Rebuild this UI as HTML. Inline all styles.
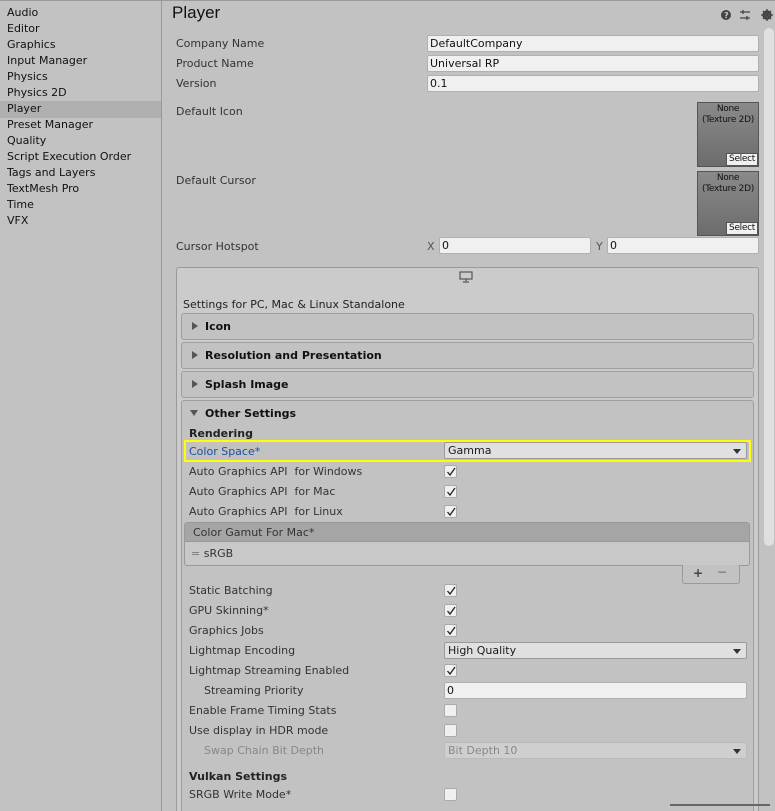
<!DOCTYPE html>
<html style="overflow:hidden;width:775px;height:811px"><head><style>
*{box-sizing:border-box;margin:0;padding:0}
body{width:775px;height:811px;overflow:hidden;background:#c2c2c2;font-family:"DejaVu Sans","Liberation Sans",sans-serif;font-size:11px;color:#1a1a1a;position:relative}
.a{position:absolute;white-space:nowrap}
.side{position:absolute;left:0;top:0;width:162px;height:811px;background:#c2c2c2;border-right:1px solid #999;border-top:1px solid #999}
.si{position:absolute;left:7px;font-size:11px;color:#111;top:6px}
.lab{position:absolute;font-size:11px;color:#333;line-height:14px;margin-top:1px}
.fld{position:absolute;height:17px;background:#f0f0f0;border:1px solid #b0b0b0;border-radius:2px;font-size:11px;line-height:15px;padding-left:2px;color:#111}
.cb{position:absolute;width:13px;height:13px;background:#f0f0f0;border:1px solid #aaa;border-radius:2px}
.cb svg{position:absolute;left:1px;top:1px}
.dd{position:absolute;height:17px;background:#e0e0e0;border:1px solid #999;border-radius:2px;font-size:11px;line-height:15px;padding-left:3px}
.dd:after{content:"";position:absolute;right:5px;top:6px;border-left:4px solid transparent;border-right:4px solid transparent;border-top:5px solid #333}
.fo{position:absolute;left:181px;width:573px;height:27px;background:#c2c2c2;border:1px solid #9f9f9f;border-radius:3px}
.fo span{position:absolute;left:23px;top:6px;font-weight:bold;font-size:11px;color:#111}
.fo i{position:absolute;left:10px;top:8px;border-top:4px solid transparent;border-bottom:4px solid transparent;border-left:6px solid #555}
.tex{position:absolute;left:697px;width:62px;height:65px;border:1px solid #555;background:linear-gradient(#8a8a8a,#6c6c6c);font-size:9px;text-align:center;line-height:11px;color:#111;letter-spacing:-0.3px;padding-top:1px}
.tex b{font-weight:normal;position:absolute;right:0;bottom:0;background:#f0f0f0;border:1px solid #555;font-size:9px;padding:0 2px;line-height:11px}
</style></head><body>
<div class="side">
<div style="position:absolute;left:0;top:100px;width:161px;height:17px;background:#b0b0b0"></div>
<div class="si" style="top:5px">Audio</div>
<div class="si" style="top:21px">Editor</div>
<div class="si" style="top:37px">Graphics</div>
<div class="si" style="top:53px">Input Manager</div>
<div class="si" style="top:69px">Physics</div>
<div class="si" style="top:85px">Physics 2D</div>
<div class="si" style="top:101px">Player</div>
<div class="si" style="top:117px">Preset Manager</div>
<div class="si" style="top:133px">Quality</div>
<div class="si" style="top:149px">Script Execution Order</div>
<div class="si" style="top:165px">Tags and Layers</div>
<div class="si" style="top:181px">TextMesh Pro</div>
<div class="si" style="top:197px">Time</div>
<div class="si" style="top:213px">VFX</div>
</div>
<div class="a" style="left:162px;top:0;width:613px;height:1px;background:#999"></div>
<div class="a" style="left:172px;top:3px;font-size:17px;font-family:'Liberation Sans',sans-serif;color:#111">Player</div>
<svg class="a" style="left:721px;top:9px" width="54" height="12"><circle cx="5" cy="6" r="5" fill="#444"/><text x="3" y="9" font-size="8" fill="#ccc" font-weight="bold">?</text><path d="M19 3h10M19 9h10M22 1v4M26 7v4" stroke="#444" stroke-width="1.3"/><circle cx="46" cy="6" r="3.5" fill="none" stroke="#444" stroke-width="2.4"/><path d="M46 0v12M40 6h12M42 2l8 8M50 2l-8 8" stroke="#444" stroke-width="1.3"/></svg>
<div class="a" style="left:764px;top:28px;width:10px;height:518px;background:#e0e0e0;border-radius:5px"></div>
<div class="lab" style="left:176px;top:36px">Company Name</div>
<div class="lab" style="left:176px;top:56px">Product Name</div>
<div class="lab" style="left:176px;top:76px">Version</div>
<div class="fld" style="left:427px;top:35px;width:332px">DefaultCompany</div>
<div class="fld" style="left:427px;top:55px;width:332px">Universal RP</div>
<div class="fld" style="left:427px;top:75px;width:332px">0.1</div>
<div class="lab" style="left:176px;top:104px">Default Icon</div>
<div class="lab" style="left:176px;top:173px">Default Cursor</div>
<div class="tex" style="top:102px">None<br>(Texture 2D)<b>Select</b></div>
<div class="tex" style="top:171px">None<br>(Texture 2D)<b>Select</b></div>
<div class="lab" style="left:176px;top:239px">Cursor Hotspot</div>
<div class="lab" style="left:427px;top:239px;color:#555">X</div>
<div class="fld" style="left:439px;top:237px;width:152px">0</div>
<div class="lab" style="left:596px;top:239px;color:#555">Y</div>
<div class="fld" style="left:607px;top:237px;width:152px">0</div>
<div class="a" style="left:176px;top:267px;width:583px;height:560px;background:#cbcbcb;border:1px solid #9a9a9a;border-radius:3px"></div>
<svg class="a" style="left:459px;top:271px" width="14" height="12"><rect x="1" y="1" width="12" height="7" fill="none" stroke="#555" stroke-width="1.2"/><path d="M7 8v2M4 11h6" stroke="#555" stroke-width="1.3"/></svg>
<div class="lab" style="left:183px;top:297px;color:#222">Settings for PC, Mac &amp; Linux Standalone</div>
<div class="fo" style="top:313px"><i></i><span>Icon</span></div>
<div class="fo" style="top:342px"><i></i><span>Resolution and Presentation</span></div>
<div class="fo" style="top:371px"><i></i><span>Splash Image</span></div>
<div class="fo" style="top:400px;height:420px"><i style="border:none;border-left:4px solid transparent;border-right:4px solid transparent;border-top:6px solid #555;left:8px;top:9px"></i><span>Other Settings</span></div>
<div class="lab" style="left:189px;top:426px;font-weight:bold;color:#222">Rendering</div>
<div class="a" style="left:184px;top:440px;width:567px;height:22px;border:2px solid #ff0"></div>
<div class="lab" style="left:189px;top:444px;color:#1a4fa0">Color Space*</div>
<div class="dd" style="left:444px;top:442px;width:303px">Gamma</div>
<div class="lab" style="left:189px;top:464px">Auto Graphics API&nbsp; for Windows</div>
<div class="lab" style="left:189px;top:484px">Auto Graphics API&nbsp; for Mac</div>
<div class="lab" style="left:189px;top:504px">Auto Graphics API&nbsp; for Linux</div>
<div class="cb" style="left:444px;top:465px"><svg width="10" height="10"><path d="M1.5 5l2.5 3 5-7" fill="none" stroke="#222" stroke-width="1.3"/></svg></div>
<div class="cb" style="left:444px;top:485px"><svg width="10" height="10"><path d="M1.5 5l2.5 3 5-7" fill="none" stroke="#222" stroke-width="1.3"/></svg></div>
<div class="cb" style="left:444px;top:505px"><svg width="10" height="10"><path d="M1.5 5l2.5 3 5-7" fill="none" stroke="#222" stroke-width="1.3"/></svg></div>
<div class="a" style="left:184px;top:522px;width:566px;height:44px;border:1px solid #999;border-radius:3px;background:#c8c8c8;overflow:hidden"><div style="height:19px;background:#a5a5a5;border-bottom:1px solid #999;padding-left:8px;line-height:19px;color:#333">Color Gamut For Mac*</div><div style="padding-left:6px;line-height:23px;color:#333"><span style="color:#777">=</span>&nbsp;sRGB</div></div>
<div class="a" style="left:682px;top:565px;width:58px;height:19px;border:1px solid #999;border-top:none;border-radius:0 0 3px 3px;background:#c2c2c2;font-size:12px;color:#444"><span style="position:absolute;left:10px;top:1px;font-weight:bold">+</span><span style="position:absolute;left:34px;top:0;color:#666">−</span></div>
<div class="lab" style="left:189px;top:583px">Static Batching</div>
<div class="lab" style="left:189px;top:603px">GPU Skinning*</div>
<div class="lab" style="left:189px;top:623px">Graphics Jobs</div>
<div class="lab" style="left:189px;top:643px">Lightmap Encoding</div>
<div class="lab" style="left:189px;top:663px">Lightmap Streaming Enabled</div>
<div class="lab" style="left:204px;top:683px">Streaming Priority</div>
<div class="lab" style="left:189px;top:703px">Enable Frame Timing Stats</div>
<div class="lab" style="left:189px;top:723px">Use display in HDR mode</div>
<div class="lab" style="left:204px;top:743px;color:#888">Swap Chain Bit Depth</div>
<div class="lab" style="left:189px;top:769px;font-weight:bold;color:#222">Vulkan Settings</div>
<div class="lab" style="left:189px;top:787px">SRGB Write Mode*</div>
<div class="cb" style="left:444px;top:584px"><svg width="10" height="10"><path d="M1.5 5l2.5 3 5-7" fill="none" stroke="#222" stroke-width="1.3"/></svg></div>
<div class="cb" style="left:444px;top:604px"><svg width="10" height="10"><path d="M1.5 5l2.5 3 5-7" fill="none" stroke="#222" stroke-width="1.3"/></svg></div>
<div class="cb" style="left:444px;top:624px"><svg width="10" height="10"><path d="M1.5 5l2.5 3 5-7" fill="none" stroke="#222" stroke-width="1.3"/></svg></div>
<div class="dd" style="left:444px;top:642px;width:303px">High Quality</div>
<div class="cb" style="left:444px;top:664px"><svg width="10" height="10"><path d="M1.5 5l2.5 3 5-7" fill="none" stroke="#222" stroke-width="1.3"/></svg></div>
<div class="fld" style="left:444px;top:682px;width:303px">0</div>
<div class="cb" style="left:444px;top:704px"></div>
<div class="cb" style="left:444px;top:724px"></div>
<div class="dd" style="left:444px;top:742px;width:303px;background:#cfcfcf;border-color:#bbb;color:#888">Bit Depth 10</div>
<div class="cb" style="left:444px;top:788px"></div>
<div class="a" style="left:670px;top:804px;width:100px;height:2px;background:#666"></div>
</body></html>
